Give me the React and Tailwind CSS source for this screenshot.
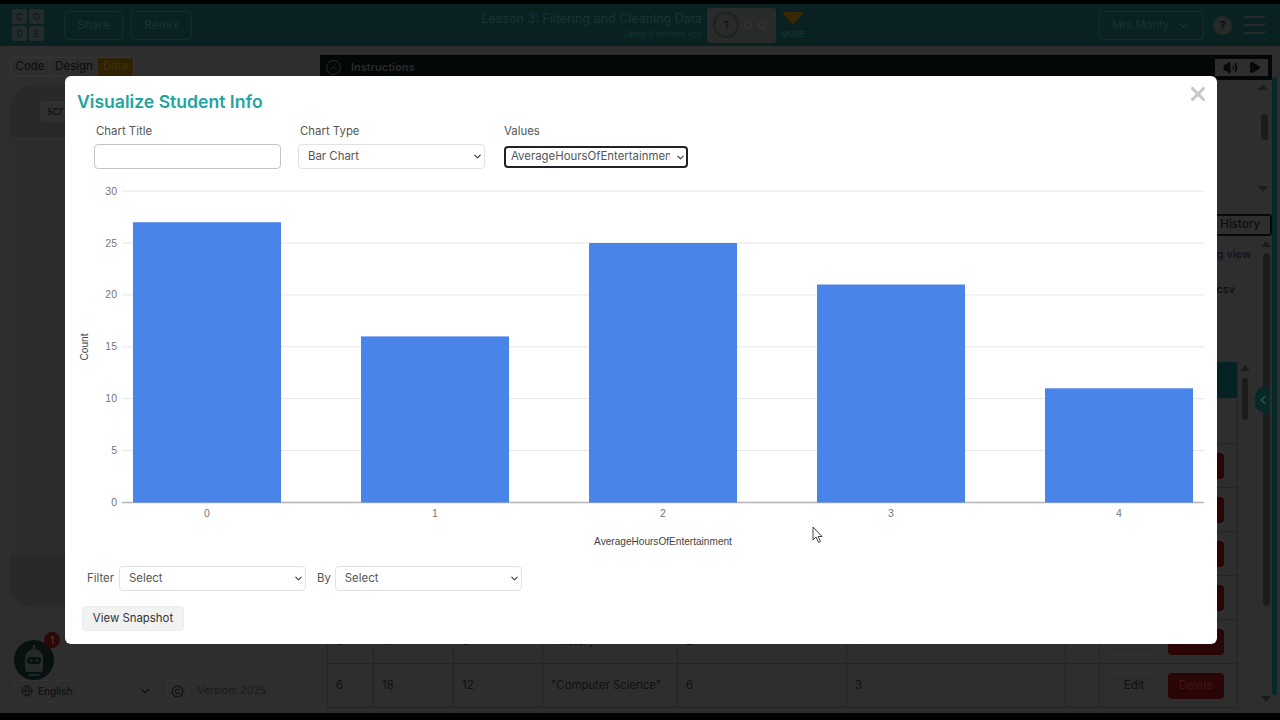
import { ChevronDown, ChevronUp, Globe, Copyright, Volume2, Play, X, ChevronLeft } from "lucide-react";

const ticks = [30, 25, 20, 15, 10, 5, 0];
const bars = [
  { label: "0", x: 133, value: 27 },
  { label: "1", x: 361, value: 16 },
  { label: "2", x: 589, value: 25 },
  { label: "3", x: 817, value: 21 },
  { label: "4", x: 1045, value: 11 },
];

// rows 1-4 sit fully behind the modal, only their Delete stubs show
const rows = [
  { id: "1", cells: [] },
  { id: "2", cells: [] },
  { id: "3", cells: [] },
  { id: "4", cells: [] },
  { id: "5", cells: ["5", "17", "3", '"History"', "2", "1"] },
  { id: "6", cells: ["6", "18", "12", '"Computer Science"', "6", "3"], labels: true },
];

function Dropdown({ value }) {
  return (
    <div className="relative w-[187px]">
      <select
        className="block h-[25px] w-full appearance-none rounded-[4px] border border-[#e2e2e2] bg-white pl-[9px] pr-[17px] text-[11.4px] text-[#555] outline-none"
        defaultValue={value}
      >
        <option>{value}</option>
      </select>
      <ChevronDown size={11} strokeWidth={2.2} className="pointer-events-none absolute right-[2px] top-[7px] text-[#333]" />
    </div>
  );
}

function Chart() {
  // chart box starts at x=78 y=182 on the page
  const yOf = (v) => 320.5 - v * 10.38;
  return (
    <svg width="1132" height="372" className="block" style={{ fontFamily: "'Liberation Sans', Arial, sans-serif" }}>
      {ticks.map((t) => (
        <g key={t}>
          <line x1="44" x2="1126" y1={yOf(t)} y2={yOf(t)} stroke={t === 0 ? "#b5b5b5" : "#e6e6e6"} strokeWidth={t === 0 ? 1.5 : 1} />
          <text x="39" y={yOf(t) + 3.5} textAnchor="end" fontSize="10.5" fill="#777">
            {t}
          </text>
        </g>
      ))}
      {bars.map((b) => (
        <g key={b.label}>
          <rect x={b.x - 78} y={yOf(b.value)} width="148" height={b.value * 10.38} fill="#4985e8" />
          <text x={b.x - 78 + 74} y="335" textAnchor="middle" fontSize="10.5" fill="#777">
            {b.label}
          </text>
        </g>
      ))}
      <text x="585" y="363" textAnchor="middle" fontSize="10.1" fill="#444">
        AverageHoursOfEntertainment
      </text>
      <text transform="translate(10 165) rotate(-90)" textAnchor="middle" fontSize="10.1" fill="#444">
        Count
      </text>
    </svg>
  );
}

function Modal() {
  return (
    <div className="absolute left-[65px] top-[76px] flex h-[568px] w-[1152px] flex-col rounded-[6px] bg-white pl-[13px] text-[#555]">
      <button type="button" className="absolute right-[8px] top-[7px] text-[#c9c7c2]">
        <X size={22} strokeWidth={3.4} />
      </button>
      <h2 className="-ml-[1px] mt-[14px] text-[17.6px] leading-[24px] font-semibold text-[#1fa5a0]">Visualize Student Info</h2>

      <div className="mt-[8px] flex pl-[16px]">
        <div className="flex w-[187px] flex-col gap-[4px]">
          <label className="pl-[2px] text-[11.4px] leading-[18px]">Chart Title</label>
          <input className="h-[25px] rounded-[4px] border border-[#c4c4c4] bg-white outline-none" />
        </div>
        <div className="ml-[17px] flex w-[187px] flex-col gap-[4px]">
          <label className="pl-[2px] text-[11.4px] leading-[18px]">Chart Type</label>
          <Dropdown value="Bar Chart" />
        </div>
        <div className="ml-[19px] flex w-[184px] flex-col gap-[4px]">
          <label className="text-[11.4px] leading-[18px]">Values</label>
          <div className="relative mt-[2px] w-[184px]">
            <select
              className="block h-[22px] w-full appearance-none rounded-[4px] border-2 border-[#222] bg-white pl-[5px] pr-[16px] text-[11.4px] text-[#555] outline-none"
              defaultValue="AverageHoursOfEntertainment"
            >
              <option>AverageHoursOfEntertainment</option>
            </select>
            <ChevronDown size={11} strokeWidth={2.2} className="pointer-events-none absolute right-[2px] top-[6px] text-[#333]" />
          </div>
        </div>
      </div>

      <div className="mt-[13px]">
        <Chart />
      </div>

      <div className="mt-[12px] flex items-center pl-[9px]">
        <span className="mr-[5px] text-[11.4px]">Filter</span>
        <Dropdown value="Select" />
        <span className="mr-[4px] ml-[11px] text-[11.4px]">By</span>
        <Dropdown value="Select" />
      </div>

      <button
        type="button"
        className="mt-[15px] ml-[4px] h-[25px] w-[102px] rounded-[4px] border border-[#ececec] bg-[#f2f2f2] text-[11.4px] text-[#333]"
      >
        View Snapshot
      </button>
    </div>
  );
}

function Header() {
  return (
    <div className="flex h-[42px] items-center bg-[#0a2122] pl-[12px]">
      <div className="grid grid-cols-2 gap-[2px]">
        {["C", "O", "D", "E"].map((c) => (
          <div key={c} className="flex h-[15px] w-[15px] items-center justify-center rounded-[2px] bg-[#242b2a] text-[9px] font-medium text-[#081c1b]">
            {c}
          </div>
        ))}
      </div>
      <div className="ml-[20px] flex h-[29px] w-[59px] items-center justify-center rounded-[4px] border border-[#0e2f30] text-[12px] text-[#173536]">
        Share
      </div>
      <div className="ml-[8px] flex h-[29px] w-[61px] items-center justify-center rounded-[4px] border border-[#0e2f30] text-[12px] text-[#173536]">
        Remix
      </div>
      <div className="ml-[285px] flex w-[225px] flex-col items-end">
        <div className="whitespace-nowrap text-[12.5px] leading-[18px] text-[#173536]">Lesson 3: Filtering and Cleaning Data</div>
        <div className="whitespace-nowrap text-[8px] leading-[12px] text-[#153132]">Saved 9 minutes ago</div>
      </div>
      <div className="ml-[5px] flex h-[35px] w-[69px] items-center rounded-[3px] bg-[#282b2a] pl-[6px]">
        <div className="flex h-[26px] w-[26px] items-center justify-center rounded-full border-2 border-[#1e2120] text-[11px] text-[#0c0c0c]">
          1
        </div>
        <div className="ml-[5px] h-[8px] w-[8px] rounded-full border border-[#383838]" />
        <div className="ml-[6px] h-[8px] w-[8px] rounded-full border border-[#383838]" />
      </div>
      <div className="ml-[5px] flex w-[24px] flex-col items-center">
        <svg width="22" height="14" viewBox="0 0 22 14">
          <path d="M0 0H22L11 13Z" fill="#3a2804" />
        </svg>
        <span className="mt-[3px] text-[8px] leading-[10px] text-[#173536]">MORE</span>
      </div>
      <div className="ml-[294px] flex h-[29px] w-[105px] items-center justify-center gap-[7px] rounded-[4px] border border-[#0e2f30] text-[11.2px] text-[#173536]">
        Mrs.Monty
        <ChevronDown size={15} />
      </div>
      <div className="ml-[9px] flex h-[19px] w-[19px] items-center justify-center rounded-full bg-[#262a29] text-[11px] font-bold text-[#0c0c0c]">
        ?
      </div>
      <div className="ml-[12px] flex w-[21px] flex-col gap-[6px]">
        <div className="h-[2px] bg-[#242b2a]" />
        <div className="h-[2px] bg-[#242b2a]" />
        <div className="h-[2px] bg-[#242b2a]" />
      </div>
    </div>
  );
}

function Robot() {
  return (
    <div className="relative ml-[4px] mt-[33px] h-[40px] w-[40px]">
      <svg width="40" height="40" viewBox="0 0 40 40">
        <circle cx="20" cy="20" r="20" fill="#081010" />
        <rect x="19" y="5" width="2" height="5" fill="#262b2a" />
        <circle cx="20" cy="6" r="1.500" fill="#262b2a" />
        <path d="M11 18a9 9 0 0 1 18 0v11a3 3 0 0 1-3 3H14a3 3 0 0 1-3-3Z" fill="#262b2a" />
        <rect x="13" y="17" width="14" height="7" rx="3.500" fill="#081010" />
        <circle cx="17" cy="20.500" r="1.200" fill="#262b2a" />
        <circle cx="23" cy="20.500" r="1.200" fill="#262b2a" />
        <rect x="14" y="34" width="12" height="2" rx="1" fill="#102e2d" />
      </svg>
      <div className="absolute -right-[6px] -top-[8px] flex h-[16px] w-[16px] items-center justify-center rounded-full bg-[#2e0707] text-[10px] font-medium text-[#4d3c3c]">
        1
      </div>
    </div>
  );
}

function LeftPane() {
  return (
    <div className="flex w-[320px] shrink-0 flex-col pl-[10px]">
      <div className="mt-[11px] flex h-[20px] w-[124px] overflow-hidden rounded-[3px] border border-[#363636] text-[11.4px] text-[#0c0c0c]">
        <div className="flex w-[39px] items-center justify-center border-r border-[#363636]">Code</div>
        <div className="flex w-[48px] items-center justify-center">Design</div>
        <div className="flex flex-1 items-center justify-center bg-[#2e2203] text-[#40300a]">Data</div>
      </div>
      <div className="mt-[8px] flex h-[522px] w-[300px] flex-col overflow-hidden rounded-[24px] bg-[#2d2d2d]">
        <div className="flex h-[52px] shrink-0 items-center bg-[#292929] pl-[30px]">
          <div className="flex h-[21px] w-[60px] items-center rounded-[2px] bg-[#303030] pl-[7px] text-[11px] text-[#0c0c0c]">scr</div>
        </div>
        <div className="flex-1" />
        <div className="h-[52px] shrink-0 bg-[#292929]" />
      </div>
      <Robot />
      <div className="ml-[4px] flex h-[22px] items-center text-[10px] font-medium text-[#101010]">
        <div className="flex h-[22px] w-[144px] items-center gap-[5px] rounded-[3px] border border-[#333] pl-[6px]">
          <Globe size={12} />
          English
          <ChevronDown size={14} className="ml-auto mr-[5px]" />
        </div>
        <div className="ml-[9px] flex h-[22px] w-[21px] items-center justify-center rounded-[3px] border border-[#333]">
          <Copyright size={13} />
        </div>
        <span className="ml-[9px] text-[10.5px] font-normal text-[#191919]">Version: 2025</span>
      </div>
    </div>
  );
}

function Row({ cells, labels }) {
  const widths = ["w-[46px]", "w-[80px]", "w-[89px]", "w-[135px]", "w-[169px]", "w-[219px]", "w-[34px]"];
  return (
    <div className="flex h-[44px] items-center border-b border-[#242424] text-[11.4px] text-[#101010]">
      {widths.map((w, i) => (
        <div key={w} className={`flex h-full items-center border-r border-[#242424] pl-[8px] ${w}`}>
          {cells[i]}
        </div>
      ))}
      <div className="flex items-center gap-[9px] pl-[9px]">
        <div className="flex h-[26px] w-[50px] items-center justify-center rounded-[3px] border border-[#333]">{labels && "Edit"}</div>
        <div className="flex h-[26px] w-[56px] items-center justify-center rounded-[4px] bg-[#2a0505] text-[#3f1616]">{labels && "Delete"}</div>
      </div>
    </div>
  );
}

function ScrollUp() {
  return <div className="h-0 w-0 border-x-[5px] border-b-[6px] border-x-transparent border-b-[#1c1c1c]" />;
}

function ScrollDown() {
  return <div className="h-0 w-0 border-x-[5px] border-t-[6px] border-x-transparent border-t-[#1c1c1c]" />;
}

function RightPane() {
  return (
    <div className="flex flex-1">
      <div className="flex w-[952px] shrink-0 flex-col">
        <div className="mt-[9px] flex h-[25px] items-center justify-between bg-[#040707] pl-[6px] pr-[4px]">
          <div className="flex items-center gap-[10px] text-[11px] font-semibold text-[#2a2a2a]">
            <div className="flex h-[15px] w-[15px] items-center justify-center rounded-full border border-[#2a2a2a]">
              <ChevronUp size={12} />
            </div>
            Instructions
          </div>
          <div className="flex h-[17px] w-[53px] items-center justify-center gap-[10px] bg-[#2e2e2e] text-[#080808]">
            <Volume2 size={15} fill="#080808" />
            <Play size={13} fill="#080808" />
          </div>
        </div>

        <div className="flex h-[134px] flex-col items-end pr-[4px] pt-[4px]">
          <ScrollUp />
          <div className="mt-[24px] h-[26px] w-[7px] rounded-full bg-[#1c1c1c]" />
          <div className="mt-[46px]">
            <ScrollDown />
          </div>
        </div>

        <div className="flex h-[22px] justify-end">
          <div className="flex w-[130px] items-center justify-end whitespace-nowrap rounded-[3px] border-2 border-[#080808] pr-[10px] text-[11.5px] font-medium text-[#0c0c0c]">
            Version History
          </div>
        </div>

        <div className="relative flex flex-1">
          <div className="flex w-[936px] shrink-0 flex-col">
            <div className="mt-[11px] h-[14px] pr-[5px] text-right text-[11px] leading-[14px] font-medium text-[#101020]">Debug view</div>
            <div className="mt-[21px] h-[14px] pr-[21px] text-right text-[11px] leading-[14px] font-medium text-[#0c0c0c]">csv</div>
            <div className="mt-[66px] flex">
              <div className="ml-[7px] w-[911px] shrink-0 border-x border-[#242424]">
                <div className="flex h-[36px] justify-end">
                  <div className="h-full w-[21px] bg-[#062324]" />
                </div>
                <div className="h-[46px] border-b border-[#242424]" />
                {rows.map((r) => (
                  <Row key={r.id} cells={r.cells} labels={r.labels} />
                ))}
              </div>
              <div className="ml-[2px] flex flex-col items-center pt-[3px]">
                <ScrollUp />
                <div className="mt-[7px] h-[42px] w-[6px] rounded-full bg-[#1c1c1c]" />
              </div>
            </div>
          </div>
          <div className="ml-[5px] flex flex-col items-center pt-[5px]">
            <ScrollUp />
            <div className="mt-[6px] h-[353px] w-[7px] rounded-full bg-[#1c1c1c]" />
            <div className="mt-[90px]">
              <ScrollDown />
            </div>
          </div>
          <div className="absolute right-[2px] top-[151px] flex h-[26px] w-[15px] items-center justify-center rounded-l-[10px] bg-[#072829] text-[#2d5050]">
            <ChevronLeft size={14} strokeWidth={3} />
          </div>
        </div>
      </div>
      <div className="mb-[18px] mt-[31px] w-[5px] rounded-[5px] bg-[#06292a]" />
    </div>
  );
}

export default function App() {
  return (
    <div className="relative flex h-[720px] w-[1280px] flex-col overflow-hidden bg-black" style={{ fontFamily: "Inter, 'Liberation Sans', sans-serif" }}>
      <div className="h-[4px] shrink-0" />
      <Header />
      <div className="flex h-[667px] shrink-0 bg-[#2e2e2e]">
        <LeftPane />
        <RightPane />
      </div>
      <Modal />
      {/* mouse pointer from the recording */}
      <svg width="12" height="18" viewBox="0 0 12 18" className="absolute left-[812px] top-[526px]">
        <path d="M1 1V14L4 11L6.500 16.500L8.500 15.500L6 10.500H10Z" fill="#fff" stroke="#444" strokeWidth="1" />
      </svg>
    </div>
  );
}
